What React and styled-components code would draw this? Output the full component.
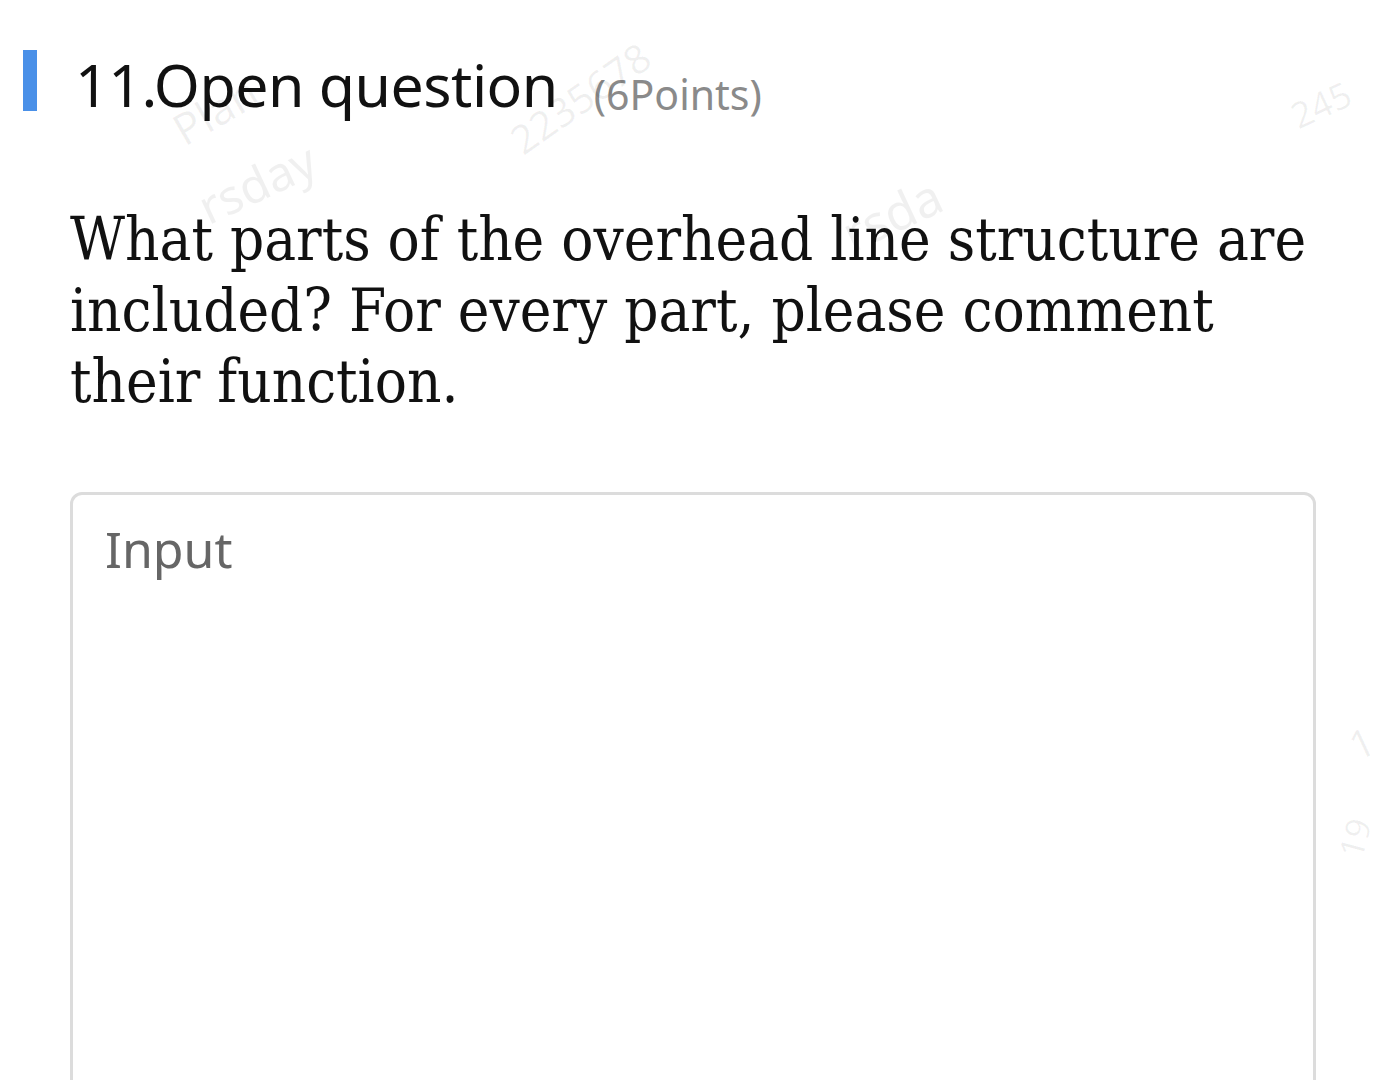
import React from 'react';
import styled, { createGlobalStyle } from 'styled-components';

const GlobalStyle = createGlobalStyle`
  html, body {
    margin: 0;
    padding: 0;
    background: #ffffff;
  }
  body {
    overflow: hidden;
  }
`;

const Page = styled.div`
  position: relative;
  width: 1391px;
  height: 1080px;
  overflow: hidden;
  background: #fff;
`;

const Header = styled.div`
  display: flex;
  align-items: center;
  padding: 50px 0 0 23px;
  height: 61px;
`;

const Bar = styled.div`
  width: 14px;
  height: 61px;
  background: #4a90e8;
  margin-right: 38px;
`;

const Title = styled.h2`
  margin: 6px 0 0 0;
  font-family: "Noto Sans", "Open Sans", sans-serif;
  font-weight: 400;
  font-size: 59px;
  letter-spacing: -0.5px;
  color: #111;
`;

const Points = styled.span`
  margin: 26px 0 0 36px;
  font-family: "Noto Sans", sans-serif;
  font-size: 41px;
  color: #8a8a8a;
`;

const Question = styled.p`
  margin: 93px 0 0 70px;
  width: 1250px;
  font-family: "DejaVu Serif Condensed", "DejaVu Serif", serif;
  font-stretch: condensed;
  font-size: 59.5px;
  line-height: 71px;
  color: #111;
`;

const InputBox = styled.div`
  margin: 75px 0 0 70px;
  width: 1246px;
  height: 640px;
  border: 3px solid #dcdcdc;
  border-radius: 12px;
  padding: 20px 32px;
  box-sizing: border-box;
`;

const Placeholder = styled.div`
  font-family: "Noto Sans", sans-serif;
  font-size: 50px;
  color: #666;
`;

const Mark = styled.span`
  position: absolute;
  font-family: "Noto Sans", sans-serif;
  font-size: ${(p) => p.size || 40}px;
  color: rgba(0, 0, 0, 0.06);
  transform: rotate(${(p) => p.rot || -30}deg);
  pointer-events: none;
  white-space: nowrap;
`;

const marks = [
  { text: 'rsday', left: 195, top: 150, rot: -25, size: 48 },
  { text: 'Plan', left: 170, top: 80, rot: -30, size: 44 },
  { text: '2235678', left: 500, top: 70, rot: -35, size: 40 },
  { text: 'rsda', left: 840, top: 180, rot: -25, size: 50 },
  { text: '245', left: 1290, top: 80, rot: -25, size: 36 },
  { text: '1', left: 1350, top: 715, rot: -25, size: 40 },
  { text: '19', left: 1335, top: 815, rot: -75, size: 34 },
];

const App = () => {
  return (
    <>
      <GlobalStyle />
      <Page>
        {marks.map((m, i) => (
          <Mark
            key={i}
            size={m.size}
            rot={m.rot}
            style={{ left: m.left, top: m.top }}
          >
            {m.text}
          </Mark>
        ))}
        <Header>
          <Bar />
          <Title>11.Open question</Title>
          <Points>(6Points)</Points>
        </Header>
        <Question>
          What parts of the overhead line structure are included? For every
          part, please comment their function.
        </Question>
        <InputBox>
          <Placeholder>Input</Placeholder>
        </InputBox>
      </Page>
    </>
  );
};

export default App;
